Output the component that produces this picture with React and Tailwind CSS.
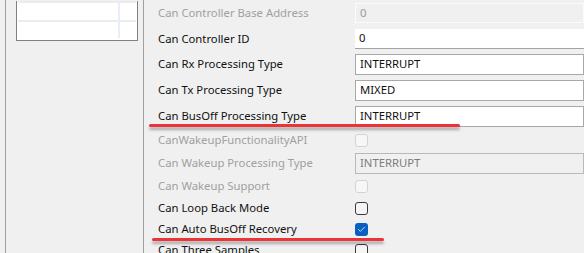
import { Check } from 'lucide-react';

const font = { fontFamily: '"Noto Sans", "Open Sans", sans-serif' };

function Label({ text, disabled }) {
    return (
        <span className={`w-[197px] shrink-0 text-[11.3px] ${disabled ? 'text-[#a0a0a0]' : 'text-[#111]'}`}>
            {text}
        </span>
    );
}

function TextBox({ value, variant }) {
    if (variant === 'plain') {
        return (
            <div className="flex-1 h-[20px] bg-white border-b border-[#a2a2a2] flex items-center pl-[4px] text-[11.3px] text-[#111]">
                {value}
            </div>
        );
    }
    if (variant === 'disabledLight') {
        return (
            <div className="flex-1 h-[20px] bg-[#f0f0f0] border border-[#fbfbfb] flex items-center pl-[4px] text-[11.3px] text-[#9a9a9a]">
                {value}
            </div>
        );
    }
    if (variant === 'disabled') {
        return (
            <div className="flex-1 h-[21px] bg-[#f0f0f0] border border-[#b9b9b9] flex items-center pl-[4px] text-[11.3px] text-[#7c7c7c]">
                {value}
            </div>
        );
    }
    return (
        <div className="flex-1 h-[21px] bg-white border border-[#a8a8a8] flex items-center pl-[4px] text-[11.3px] text-[#111]">
            {value}
        </div>
    );
}

function CheckBox({ state }) {
    if (state === 'disabled') {
        return <div className="w-[13px] h-[13px] rounded-[3px] border border-[#d3d3d3] bg-[#f7f7f7]" />;
    }
    if (state === 'checked') {
        return (
            <div className="w-[13px] h-[13px] rounded-[3px] bg-[#0a5fc2] flex items-center justify-center">
                <Check className="w-[9px] h-[9px] text-white" strokeWidth={2} />
            </div>
        );
    }
    return <div className="w-[13px] h-[13px] rounded-[3px] border border-[#3a3a3a] bg-[#f5f5f5]" />;
}

const rows = [
    { h: 'h-[26px]', label: 'Can Controller Base Address', disabled: true, box: { value: '0', variant: 'disabledLight' } },
    { h: 'h-[26px]', label: 'Can Controller ID', box: { value: '0', variant: 'plain' } },
    { h: 'h-[25px]', label: 'Can Rx Processing Type', box: { value: 'INTERRUPT' } },
    { h: 'h-[26px]', label: 'Can Tx Processing Type', box: { value: 'MIXED' } },
    { h: 'h-[26px]', label: 'Can BusOff Processing Type', box: { value: 'INTERRUPT' } },
    { h: 'h-[22px]', label: 'CanWakeupFunctionalityAPI', disabled: true, check: 'disabled' },
    { h: 'h-[24px]', label: 'Can Wakeup Processing Type', disabled: true, box: { value: 'INTERRUPT', variant: 'disabled' } },
    { h: 'h-[23px]', label: 'Can Wakeup Support', disabled: true, check: 'disabled' },
    { h: 'h-[21px]', label: 'Can Loop Back Mode', check: 'off' },
    { h: 'h-[21px]', label: 'Can Auto BusOff Recovery', check: 'checked' },
    { h: 'h-[21px]', label: 'Can Three Samples', check: 'off' },
];

export default function App() {
    return (
        <div className="relative w-[584px] h-[253px] overflow-hidden bg-[#f0f0f0] flex" style={font}>
            <div className="ml-[5px] w-[139px] h-full shrink-0 border-x border-[#a0a0a0] pl-[10px]">
                <div className="w-[122px] h-[40px] bg-white border-x border-b border-[#808080] relative">
                    <div className="mt-[1px] mx-[1px] border-t-2 border-[#ececec] h-[19px]" />
                    <div className="mx-[1px] border-t-2 border-[#ececec] h-[17px]" />
                    <div className="absolute left-[101px] top-0 w-[2px] h-[37px] bg-[#e8eef8]" />
                </div>
            </div>

            <div className="flex-1 flex flex-col pl-[14px]">
                {rows.map((row) => (
                    <div key={row.label} className={`${row.h} shrink-0 flex items-center`}>
                        <Label text={row.label} disabled={row.disabled} />
                        {row.box ? <TextBox value={row.box.value} variant={row.box.variant} /> : <CheckBox state={row.check} />}
                    </div>
                ))}
            </div>

            {/* red annotation marks */}
            <div className="absolute left-[149px] top-[124px] w-[311px] h-[3px] rounded-full bg-[#ec3338] shadow-[0_3px_3px_rgba(0,0,0,0.3)]" />
            <div className="absolute left-[152px] top-[238px] w-[232px] h-[3px] rounded-full bg-[#ec3338] shadow-[0_3px_3px_rgba(0,0,0,0.3)]" />
        </div>
    );
}
